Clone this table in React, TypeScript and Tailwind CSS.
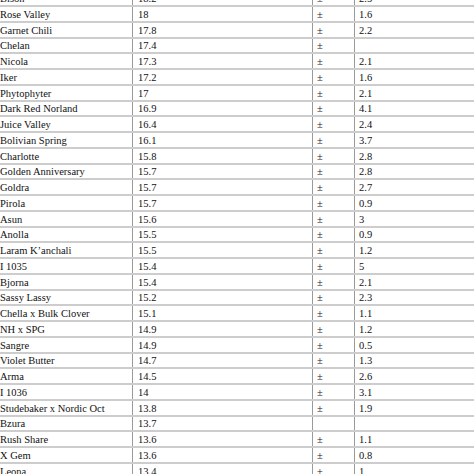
import React from "react";

const rows: [string, string, boolean, string][] = [
  ["Bison", "18.2", true, "2.5"],
  ["Rose Valley", "18", true, "1.6"],
  ["Garnet Chili", "17.8", true, "2.2"],
  ["Chelan", "17.4", true, ""],
  ["Nicola", "17.3", true, "2.1"],
  ["Iker", "17.2", true, "1.6"],
  ["Phytophyter", "17", true, "2.1"],
  ["Dark Red Norland", "16.9", true, "4.1"],
  ["Juice Valley", "16.4", true, "2.4"],
  ["Bolivian Spring", "16.1", true, "3.7"],
  ["Charlotte", "15.8", true, "2.8"],
  ["Golden Anniversary", "15.7", true, "2.8"],
  ["Goldra", "15.7", true, "2.7"],
  ["Pirola", "15.7", true, "0.9"],
  ["Asun", "15.6", true, "3"],
  ["Anolla", "15.5", true, "0.9"],
  ["Laram K\u2019anchali", "15.5", true, "1.2"],
  ["I 1035", "15.4", true, "5"],
  ["Bjorna", "15.4", true, "2.1"],
  ["Sassy Lassy", "15.2", true, "2.3"],
  ["Chella x Bulk Clover", "15.1", true, "1.1"],
  ["NH x SPG", "14.9", true, "1.2"],
  ["Sangre", "14.9", true, "0.5"],
  ["Violet Butter", "14.7", true, "1.3"],
  ["Arma", "14.5", true, "2.6"],
  ["I 1036", "14", true, "3.1"],
  ["Studebaker x Nordic Oct", "13.8", true, "1.9"],
  ["Bzura", "13.7", false, ""],
  ["Rush Share", "13.6", true, "1.1"],
  ["X Gem", "13.6", true, "0.8"],
  ["Leona", "13.4", true, "1"],
];

export default function App() {
  return (
    <div className="w-[474px] h-[474px] overflow-hidden bg-white">
      <div
        className="mt-[-8.75px] text-[10.5px] text-[#111]"
        style={{ fontFamily: '"Liberation Serif", "Times New Roman", serif' }}
      >
        {rows.map(([name, v, pm, e], i) => (
          <div
            key={i}
            className="grid grid-cols-[133px_180px_42px_1fr] h-[15.75px] border-b-2 border-[#cdcdcd]"
          >
            <div className="border-r border-[#9a9a9a] flex items-end pb-[0.5px] leading-none whitespace-nowrap">
              {name}
            </div>
            <div className="border-r border-[#9a9a9a] pl-[5px] flex items-end pb-[0.5px] leading-none">
              {v}
            </div>
            <div className="border-r border-[#9a9a9a] pl-[4px] flex items-end pb-[0.5px] leading-none">
              {pm ? "\u00b1" : ""}
            </div>
            <div className="pl-[4px] flex items-end pb-[0.5px] leading-none">{e}</div>
          </div>
        ))}
      </div>
    </div>
  );
}
